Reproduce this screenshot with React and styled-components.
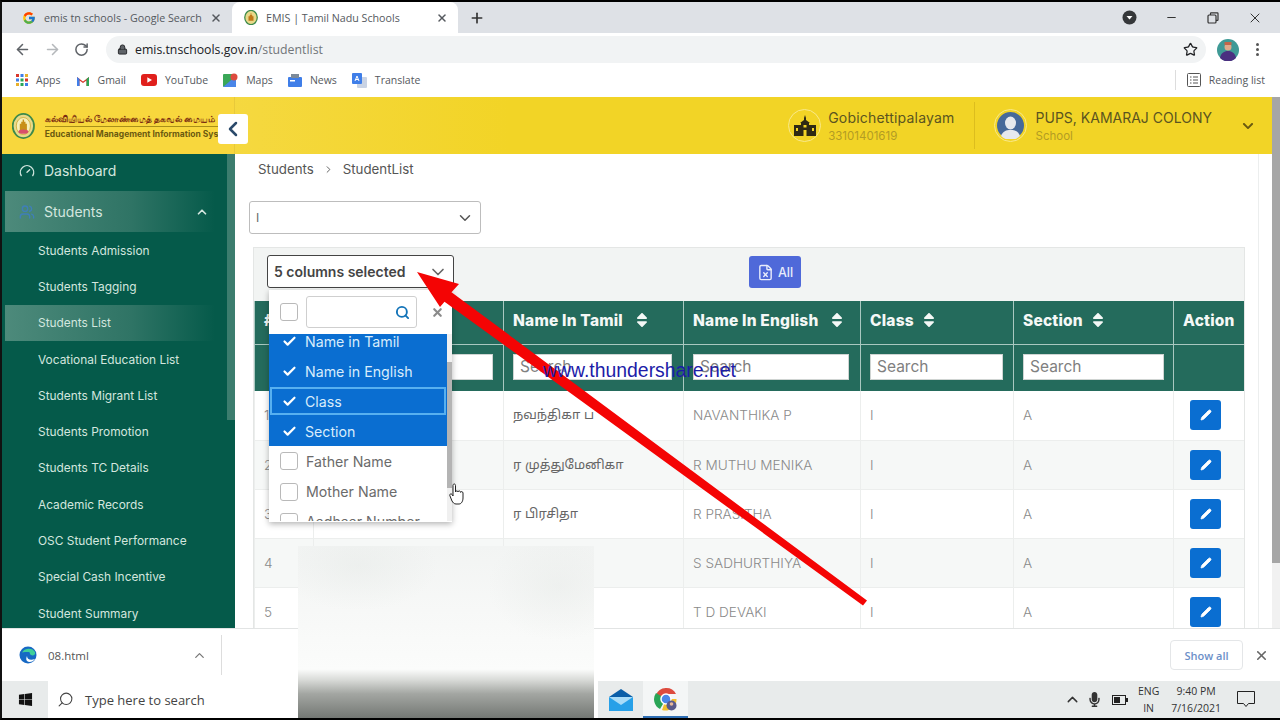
import React from 'react';
import styled, { createGlobalStyle } from 'styled-components';
import { ArrowLeft, ArrowRight, RotateCw, Star, Plus, X, Minus, Lock, ChevronDown, ChevronUp, ChevronLeft, ChevronRight, Search, Check, Pencil, FileX, Gauge, Users } from 'lucide-react';
import { FcGoogle } from 'react-icons/fc';
import { FaWindows, FaSort, FaChevronDown, FaMicrophone } from 'react-icons/fa';

const Global = createGlobalStyle`
  html, body { margin: 0; padding: 0; background: #000; }
  * { box-sizing: border-box; }
  body { font-family: Inter, "Noto Sans", sans-serif; }
`;

const Screen = styled.div`
  position: relative;
  width: 1280px;
  height: 720px;
  overflow: hidden;
  display: flex;
  flex-direction: column;
  background: #fff;
  border-top: 2px solid #000;
  border-bottom: 2px solid #000;
  border-left: 2px solid #111;
`;

/* browser chrome */
const TabStrip = styled.div`
  height: 31px;
  flex: none;
  background: #dee1e6;
  display: flex;
  align-items: flex-end;
  font-family: "Open Sans", sans-serif;
  font-size: 10.7px;
  color: #55595e;
  padding-left: 8px;
`;
const Tab = styled.div`
  width: ${p => p.$w}px;
  height: 31px;
  display: flex;
  align-items: center;
  gap: 8px;
  padding: 0 10px 0 12px;
  border-radius: 8px 8px 0 0;
  background: ${p => (p.$active ? '#fff' : 'transparent')};
  span { flex: 1; white-space: nowrap; }
  svg { flex: none; }
`;
const NewTab = styled.div`
  width: 38px;
  height: 31px;
  display: flex;
  align-items: center;
  justify-content: center;
  color: #333;
`;
const WinControls = styled.div`
  margin-left: auto;
  height: 31px;
  padding-right: 4px;
  display: flex;
  align-items: center;
  color: #333;
`;
const WinBtn = styled.div`
  width: 42px;
  display: flex;
  justify-content: center;
`;
const Toolbar = styled.div`
  height: 32px;
  flex: none;
  background: #fff;
  display: flex;
  align-items: center;
  padding: 1px 0 0 12px;
  color: #555;
`;
const NavBtn = styled.div`
  width: 30px;
  display: flex;
  color: ${p => p.$off ? '#b5b8bb' : '#5f6368'};
`;
const Omnibox = styled.div`
  margin-left: 2px;
  width: 1100px;
  height: 27px;
  border-radius: 14px;
  background: #f1f3f4;
  display: flex;
  align-items: center;
  gap: 7px;
  padding: 0 8px 0 11px;
  font-family: "Open Sans", sans-serif;
  font-size: 12.3px;
  color: #202124;
  em { font-style: normal; color: #72767a; }
`;
const ProfileSlot = styled.div`
  margin-left: 11px;
  display: flex;
`;
const MoreDots = styled.div`
  margin-left: 17px;
  display: flex;
  flex-direction: column;
  gap: 2px;
  i { width: 3px; height: 3px; border-radius: 50%; background: #555; }
`;
const Bookmarks = styled.div`
  height: 32px;
  flex: none;
  background: #fff;
  display: flex;
  align-items: center;
  padding: 0 0 2px 14px;
  font-family: "Open Sans", sans-serif;
  font-size: 10.5px;
  color: #55595e;
`;
const Mark = styled.div`
  display: flex;
  align-items: center;
  gap: 8px;
  margin-right: ${p => p.$gap}px;
`;
const ReadingList = styled.div`
  margin-left: auto;
  height: 20px;
  display: flex;
  align-items: center;
  gap: 8px;
  padding: 0 15px 0 11px;
  border-left: 1px solid #ddd;
`;

/* page */
const PageRow = styled.div`
  flex: 1;
  min-height: 0;
  display: flex;
`;
const Page = styled.div`
  flex: 1;
  min-width: 0;
  display: flex;
  flex-direction: column;
`;
const PageScroll = styled.div`
  width: 8px;
  flex: none;
  background: #f1f1f1;
  div { height: 466px; background: #a6a6a6; }
`;
const Header = styled.header`
  position: relative;
  height: 57px;
  flex: none;
  display: flex;
  align-items: center;
  background: linear-gradient(90deg, #f8dc55, #f2d426 40%);
  font-family: Inter, sans-serif;
`;
const Brand = styled.div`
  width: 233px;
  height: 100%;
  flex: none;
  display: flex;
  align-items: center;
  gap: 5px;
  padding-left: 10px;
  overflow: hidden;
  background: #f8d73d;
  border-right: 1px solid #e8c93a;
`;
const BrandText = styled.div`
  margin-left: 5px;
  white-space: nowrap;
  font-size: 8.5px;
  font-weight: 700;
  color: #6b5a10;
  div:first-child { border-bottom: 1px solid #a88f18; padding-bottom: 1px; margin-bottom: 2px; color: #7a2a10; font-family: "Noto Sans", sans-serif; }
`;
const Toggle = styled.div`
  position: absolute;
  left: 216px;
  top: 17px;
  width: 30px;
  height: 30px;
  background: #fff;
  border-radius: 3px;
  display: flex;
  align-items: center;
  justify-content: center;
  color: #2b4a6b;
`;
const HeadInfo = styled.div`
  margin-left: auto;
  display: flex;
  align-items: center;
  height: 47px;
`;
const InfoBlock = styled.div`
  display: flex;
  align-items: center;
  gap: ${p => p.$gap}px;
  padding: ${p => p.$pad};
  border-right: ${p => (p.$line ? '1px solid #dcbd1e' : 'none')};
  height: 100%;
`;
const Ring = styled.div`
  width: 33px;
  height: 33px;
  border-radius: 50%;
  border: 1.5px solid #f9e98a;
  display: flex;
  align-items: center;
  justify-content: center;
`;
const InfoName = styled.div`
  font-size: 14px;
  letter-spacing: ${p => p.$ls || 0}px;
  color: #5b5420;
  white-space: nowrap;
`;
const InfoSub = styled.div`
  margin-top: 3px;
  font-size: 11.5px;
  color: #b39c24;
`;
const HeadChevron = styled.div`
  width: 60px;
  padding-left: 12px;
  display: flex;
  justify-content: center;
  color: #6a5a10;
`;

const Main = styled.div`
  flex: 1;
  min-height: 0;
  display: flex;
`;
const Sidebar = styled.nav`
  width: 233px;
  flex: none;
  display: flex;
  background: #055a4a;
  overflow: hidden;
`;
const SideList = styled.div`
  flex: 1;
  padding: 0 12px 0 3px;
  color: #d3e6df;
`;
const SideRail = styled.div`
  width: 8px;
  flex: none;
  div { height: 266px; background: #3c7d6e; }
`;
const SideTop = styled.div`
  height: ${p => p.$h}px;
  padding: 0 6px ${p => p.$pb || 0}px 14px;
  display: flex;
  align-items: center;
  gap: 9px;
  font-size: 14px;
  background: ${p => (p.$active ? 'linear-gradient(90deg, #4d8a7b, #2f7465 60%, #055a4a 100%)' : 'transparent')};
`;
const SideCaret = styled.span`
  margin-left: auto;
  display: flex;
`;
const SideItem = styled.div`
  height: 36.3px;
  display: flex;
  align-items: center;
  padding-left: 33px;
  font-size: 11.9px;
  white-space: nowrap;
  background: ${p => (p.$active ? 'linear-gradient(90deg, #4d8a7b, #2f7465 60%, #055a4a 100%)' : 'transparent')};
`;
const Content = styled.section`
  flex: 1;
  min-width: 0;
  overflow: hidden;
  background: #fff;
  border-right: 1px solid #eceeee;
  margin-right: 13px;
  padding: 0 0 0 14px;
  color: #555;
`;
const Crumbs = styled.div`
  height: 30px;
  margin-left: 9px;
  display: flex;
  align-items: center;
  gap: 9px;
  font-size: 13.3px;
  color: #555;
`;
const ClassSelect = styled.div`
  margin-top: 17px;
  width: 232px;
  height: 33px;
  padding: 0 6px;
  border: 1px solid #bdbdbd;
  border-radius: 3px;
  display: flex;
  align-items: center;
  justify-content: space-between;
  font-size: 12px;
  color: #666;
  background: #fff;
`;
const Card = styled.div`
  position: relative;
  margin: 13px 0 0 4px;
  width: 992px;
  background: #f2f4f3;
  border: 1px solid #e4e6e5;
  border-bottom: none;
`;
const CardBar = styled.div`
  height: 53px;
  display: flex;
  align-items: flex-start;
  padding: 7px 0 0 13px;
`;
const ColumnSelect = styled.div`
  width: 187px;
  height: 33px;
  padding: 0 5px 0 6px;
  border: 1px solid #444;
  border-radius: 3px;
  background: #fff;
  display: flex;
  align-items: center;
  justify-content: space-between;
  font-size: 14px;
  font-weight: 600;
  color: #444;
  white-space: nowrap;
`;
const ExportBtn = styled.div`
  margin: 1px 0 0 295px;
  width: 52px;
  height: 32px;
  border-radius: 3px;
  background: #4f69d9;
  color: #e8ecfb;
  display: flex;
  align-items: center;
  justify-content: center;
  gap: 4px;
  font-size: 12.5px;
  font-weight: 500;
`;
const Table = styled.table`
  width: 989px;
  table-layout: fixed;
  border-collapse: collapse;
  background: #fff;
`;
const Th = styled.th`
  height: 43px;
  padding: 0 9px 3px;
  text-align: left;
  background: #246b5c;
  color: #f4f8f6;
  font-size: 15.5px;
  letter-spacing: .2px;
  font-weight: 800;
  white-space: nowrap;
  border-left: 1px solid #a9c8c0;
  border-bottom: 1px solid #a9c8c0;
  svg { margin-left: ${p => p.$iconGap || 10}px; vertical-align: -3px; }
`;
const FilterCell = styled.td`
  height: 47px;
  padding: 0 9px 2px;
  background: #246b5c;
  border-left: 1px solid #a9c8c0;
`;
const FilterInput = styled.div`
  height: 26px;
  width: ${p => p.$w}px;
  padding-left: 6px;
  background: #fff;
  border: 1px solid #cfd4d2;
  font-size: 15.5px;
  line-height: 24px;
  color: #808080;
`;
const Row = styled.tr`
  background: ${p => (p.$alt ? '#f6f8f7' : '#fff')};
`;
const Td = styled.td`
  height: 49px;
  padding: 0 9px;
  font-size: 13.6px;
  font-weight: 300;
  color: #8a8a8a;
  border-left: 1px solid #eceeed;
  border-bottom: 1px solid #eceeed;
  white-space: nowrap;
  font-family: Inter, "Noto Sans Tamil", "Noto Sans", sans-serif;
`;
const TamilTd = styled(Td)`
  font-size: 13px;
  font-weight: 400;
  color: #666;
`;
const EditBtn = styled.div`
  width: 31px;
  height: 30px;
  margin-left: 7px;
  border-radius: 3px;
  background: #0a6ed1;
  color: #fff;
  display: flex;
  align-items: center;
  justify-content: center;
`;

/* multiselect panel */
const Menu = styled.div`
  position: absolute;
  left: 15px;
  top: 42px;
  width: 183px;
  height: 232px;
  background: #fff;
  box-shadow: 0 2px 6px rgba(0, 0, 0, 0.3);
  overflow: hidden;
  z-index: 3;
`;
const MenuHead = styled.div`
  height: 44px;
  display: flex;
  align-items: center;
  padding: 0 0 0 11px;
  gap: 8px;
  color: #8a8a8a;
  svg { flex: none; }
`;
const MenuSearch = styled.div`
  width: 111px;
  height: 32px;
  flex: none;
  border: 1px solid #cfcfcf;
  border-radius: 3px;
  display: flex;
  align-items: center;
  justify-content: flex-end;
  padding-right: 6px;
  color: #1273b8;
  margin-right: 6px;
`;
const Box = styled.div`
  width: 18px;
  height: 18px;
  flex: none;
  border: 1px solid #b9b9b9;
  border-radius: 3px;
  background: #fff;
`;
const MenuBody = styled.div`
  height: 187px;
  display: flex;
  overflow: hidden;
`;
const MenuList = styled.div`
  flex: 1;
  min-width: 0;
  overflow: hidden;
`;
const MenuItem = styled.div`
  height: 30.1px;
  display: flex;
  align-items: center;
  gap: 8px;
  padding-left: ${p => (p.$on ? 13 : 11)}px;
  margin-top: ${p => p.$first ? -8 : 0}px;
  font-size: 14.2px;
  white-space: nowrap;
  color: ${p => (p.$on ? '#d8ecfb' : '#6b6b6b')};
  background: ${p => (p.$on ? '#0a6ed1' : '#fff')};
  outline: ${p => (p.$focus ? '2px solid #57b0f0' : 'none')};
  outline-offset: -3px;
`;
const MenuRail = styled.div`
  width: 5px;
  flex: none;
  background: #f0f0f0;
  div { margin-top: 28px; height: 126px; background: #b4b4b4; }
`;

/* bottom bars */
const DownloadBar = styled.div`
  height: 53px;
  flex: none;
  display: flex;
  align-items: center;
  background: #fff;
  border-top: 1px solid #e2e4e4;
  font-family: "Open Sans", sans-serif;
  font-size: 11.5px;
  color: #555;
`;
const DownloadItem = styled.div`
  width: 220px;
  height: 40px;
  padding: 0 14px 0 17px;
  display: flex;
  align-items: center;
  gap: 11px;
  border-right: 1px solid #ddd;
  svg:last-child { margin-left: auto; color: #777; }
`;
const ShowAll = styled.div`
  margin-left: auto;
  width: 73px;
  height: 30px;
  border: 1px solid #e4e6e8;
  border-radius: 4px;
  display: flex;
  align-items: center;
  justify-content: center;
  font-size: 11px;
  font-weight: 600;
  color: #6c8fc8;
`;
const CloseBar = styled.div`
  width: 37px;
  display: flex;
  justify-content: center;
  color: #666;
`;
const Taskbar = styled.div`
  height: 37px;
  flex: none;
  display: flex;
  align-items: center;
  background: #e8ebeb;
  font-family: "Open Sans", sans-serif;
  color: #222;
`;
const StartBtn = styled.div`
  width: 46px;
  display: flex;
  justify-content: center;
`;
const TaskSearch = styled.div`
  width: 550px;
  height: 37px;
  background: #fff;
  display: flex;
  align-items: center;
  gap: 11px;
  padding-left: 9px;
  font-size: 13px;
  color: #444;
`;
const TaskApp = styled.div`
  width: 45px;
  height: 37px;
  display: flex;
  align-items: center;
  justify-content: center;
  background: ${p => (p.$open ? '#f4f6f6' : 'transparent')};
  border-bottom: ${p => (p.$open ? '2px solid #2f6fb5' : 'none')};
`;
const Tray = styled.div`
  margin-left: auto;
  display: flex;
  align-items: center;
  gap: 10px;
  font-size: 10.5px;
  padding-right: 25px;
  color: #333;
`;
const TrayCaret = styled.span`
  display: flex;
  margin-right: -4px;
`;
const TrayText = styled.div`
  margin-right: ${p => p.$mr}px;
  text-align: center;
  line-height: 17px;
  white-space: nowrap;
`;

/* things lying over the screen */
const ArrowLayer = styled.svg`
  position: absolute;
  left: -2px;
  top: -2px;
  width: 1280px;
  height: 720px;
  pointer-events: none;
  z-index: 6;
`;
const Watermark = styled.div`
  position: absolute;
  left: 541px;
  top: 357px;
  font-family: "Liberation Sans", sans-serif;
  font-size: 19.4px;
  white-space: nowrap;
  color: #1c1ca8;
  z-index: 7;
`;
const Blur = styled.div`
  position: absolute;
  left: 296px;
  top: 544px;
  width: 296px;
  height: 176px;
  z-index: 4;
  background:
    radial-gradient(ellipse 80px 45px at 60px 20px, rgba(225, 229, 226, .35), transparent),
    radial-gradient(ellipse 70px 55px at 260px 40px, rgba(225, 229, 226, .35), transparent),
    linear-gradient(180deg, #f2f4f3 0, #f8f9f8 45%, #fbfcfb 70%, #d9dbd8 76%, #a3a6a2 84%, #6c706c 100%);
`;
const CursorSlot = styled.svg`
  position: absolute;
  left: 447px;
  top: 481px;
  z-index: 7;
`;

const Emblem = () => (
  <svg width="32" height="36" viewBox="0 0 32 36">
    <ellipse cx="16" cy="18" rx="15" ry="17" fill="#e8d98a" stroke="#3d8a4a" strokeWidth="2.5" />
    <ellipse cx="16" cy="18" rx="10" ry="12" fill="#f7efb8" stroke="#c8a020" />
    <path d="M11 24V15h2v-3h2V9h2v3h2v3h2v9z" fill="#c89018" />
    <ellipse cx="16" cy="26" rx="7" ry="3" fill="#d8506a" />
  </svg>
);
const TabEmblem = () => (
  <svg width="14" height="15" viewBox="0 0 32 36">
    <ellipse cx="16" cy="18" rx="15" ry="17" fill="#e8d98a" stroke="#3d8a4a" strokeWidth="3" />
    <path d="M10 26V15h3v-3h2V8h2v4h2v3h3v11z" fill="#c07818" />
  </svg>
);
const GmailIcon = () => (
  <svg width="14" height="11" viewBox="0 0 14 11">
    <path d="M1 11V2l6 4.500L13 2v9h-2.500V5.500L7 8 3.500 5.500V11z" fill="#d9372c" />
    <path d="M1 11V2l2.500 2v7z" fill="#3f7ee8" /><path d="M13 11V2l-2.500 2v7z" fill="#2aa556" />
  </svg>
);
const YouTubeIcon = () => (
  <svg width="16" height="12" viewBox="0 0 16 12">
    <rect width="16" height="12" rx="3" fill="#e0201c" /><path d="M6.300 3.200v5.600L11 6z" fill="#fff" />
  </svg>
);
const AppsIcon = () => (
  <svg width="12" height="12" viewBox="0 0 12 12">
    {['#d9372c', '#3f7ee8', '#e8b02a', '#3f7ee8', '#2aa556', '#d9372c', '#e8b02a', '#2aa556', '#3f7ee8'].map((c, i) => (
      <rect key={i} x={(i % 3) * 4.500} y={Math.floor(i / 3) * 4.500} width="3" height="3" fill={c} />
    ))}
  </svg>
);
const MapsIcon = () => (
  <svg width="15" height="14" viewBox="0 0 15 14">
    <rect y="1" width="13" height="13" rx="1" fill="#3aa757" /><path d="M0 14L13 3v11z" fill="#4a86e8" /><circle cx="11" cy="4" r="3.500" fill="#dd4b3e" />
  </svg>
);
const NewsIcon = () => (
  <svg width="14" height="13" viewBox="0 0 14 13">
    <rect y="3" width="14" height="10" rx="1" fill="#3f7ee8" /><rect x="3" width="8" height="4" fill="#7c8a99" /><rect x="2" y="6" width="5" height="1.500" fill="#fff" />
  </svg>
);
const TranslateIcon = () => (
  <svg width="15" height="15" viewBox="0 0 15 15">
    <rect x="5" y="4" width="10" height="11" rx="1" fill="#c9d3e4" /><rect width="10" height="11" rx="1" fill="#3f7ee8" />
    <path d="M3 8l2-5 2 5M3.800 6.500h2.400" stroke="#fff" fill="none" />
  </svg>
);
const ChromeIcon = () => (
  <svg width="24" height="24" viewBox="0 0 24 24">
    <path d="M12 12L2 8a11 11 0 0 1 20-1H12z" fill="#dd4b3e" />
    <path d="M12 12l-6 10A11 11 0 0 1 2 6z" fill="#2aa556" />
    <path d="M12 12h10.500A11 11 0 0 1 8 23z" fill="#f2c02e" />
    <circle cx="12" cy="12" r="5" fill="#4a86e8" stroke="#fff" strokeWidth="1.500" />
    <circle cx="17.500" cy="18.500" r="5" fill="#5a5a8a" /><circle cx="17.500" cy="17" r="1.800" fill="#e8b898" />
  </svg>
);
const EdgeIcon = () => (
  <svg width="18" height="18" viewBox="0 0 18 18">
    <circle cx="9" cy="9" r="8.500" fill="#1769c4" />
    <path d="M3 7a7 6 0 0 1 13-1c1 3-2 4-4 3-2-1 0-3-3-3-3 0-6 0-6 1z" fill="#3fcf9a" />
    <path d="M8 10c0 3 3 5 8 3-2 3-6 4-8 2-1-1-1-3 0-5z" fill="#fff" />
  </svg>
);
const MailIcon = () => (
  <svg width="24" height="22" viewBox="0 0 24 22">
    <path d="M12 0l12 8H0z" fill="#0a5ea8" /><rect y="8" width="24" height="14" fill="#27a0e8" />
    <path d="M0 8l12 8 12-8" fill="#a9dcf8" />
  </svg>
);
const SchoolIcon = () => (
  <svg width="24" height="22" viewBox="0 0 24 22" fill="#2f2a14">
    <path d="M12 0l1 3 0 2 4 3H7l4-3V3z" /><rect x="8" y="8" width="8" height="13" />
    <rect x="1" y="10" width="7" height="11" /><rect x="16" y="10" width="7" height="11" />
    <rect x="3" y="13" width="2" height="3" fill="#f2d426" /><rect x="19" y="13" width="2" height="3" fill="#f2d426" />
    <rect x="10.500" y="15" width="3" height="6" fill="#f2d426" /><rect x="10.500" y="10" width="3" height="2.500" fill="#f2d426" />
  </svg>
);
const PersonIcon = () => (
  <svg width="27" height="27" viewBox="0 0 27 27">
    <circle cx="13.500" cy="13.500" r="13.500" fill="#46699a" />
    <ellipse cx="13.500" cy="11" rx="5.500" ry="6.500" fill="#e6e9ee" />
    <path d="M4 24c2-5 5-6 9.500-6s7.500 1 9.500 6a13.500 13.500 0 0 1-19 0z" fill="#e6e9ee" />
  </svg>
);
const Avatar = () => (
  <svg width="22" height="22" viewBox="0 0 22 22">
    <circle cx="11" cy="11" r="11" fill="#3f9a96" />
    <path d="M3 19c1-5 4-7 8-7s7 2 8 7a11 11 0 0 1-16 0z" fill="#4a2f80" />
    <circle cx="11" cy="8" r="3.500" fill="#e0a98a" /><rect x="7.500" y="3" width="7" height="3" fill="#c2664a" />
  </svg>
);
const RestoreIcon = () => (
  <svg width="12" height="12" viewBox="0 0 12 12" fill="none" stroke="#333" strokeWidth="1.200">
    <rect x="1" y="3" width="8" height="8" rx="1" fill="#dee1e6" /><path d="M3.500 3V1.500a.6.6 0 0 1 .6-.6h6.300a.6.6 0 0 1 .6.600v6.300a.6.6 0 0 1-.6.600H9" />
  </svg>
);
const TabSearchIcon = () => (
  <svg width="15" height="15" viewBox="0 0 15 15">
    <circle cx="7.500" cy="7.500" r="7" fill="#35373a" /><path d="M4.500 6h6l-3 3.500z" fill="#fff" />
  </svg>
);
const HandCursor = () => (
  <CursorSlot width="16" height="22" viewBox="0 0 16 22">
    <path d="M4 2.500c0-2 2.500-2 2.500 0V9c0-1.500 2.500-1.500 2.500 0 0-1.500 2.500-1.500 2.500 0.300 0-1 2.500-1 2.500 .7V15c0 3-1.500 6-4 6H7c-2 0-3-1.500-4-3L1 13c-1-1.500 1-3 2-1.500l1 1.500z" fill="#fff" stroke="#222" strokeWidth="1" />
  </CursorSlot>
);
const ListGlyph = () => (
  <svg width="14" height="14" viewBox="0 0 14 14" fill="none" stroke="#555">
    <rect x=".5" y=".5" width="13" height="13" rx="1" /><path d="M3 4h1.500M6 4h5M3 7h1.500M6 7h5M3 10h1.500M6 10h5" />
  </svg>
);
const BatteryGlyph = () => (
  <svg width="16" height="10" viewBox="0 0 16 10">
    <rect x=".5" y=".5" width="13" height="9" fill="none" stroke="#222" /><rect x="2" y="2" width="6" height="6" fill="#222" /><rect x="14" y="3" width="2" height="4" fill="#222" />
  </svg>
);
const ChatGlyph = () => (
  <svg width="18" height="17" viewBox="0 0 18 17" fill="none" stroke="#222">
    <path d="M.5.500h17v12h-6l-2.500 3-2.500-3h-6z" />
  </svg>
);

const sideItems = ['Students Admission', 'Students Tagging', 'Students List', 'Vocational Education List', 'Students Migrant List', 'Students Promotion', 'Students TC Details', 'Academic Records', 'OSC Student Performance', 'Special Cash Incentive', 'Student Summary'];

const rows = [
  { n: 1, ta: 'நவந்திகா ப', en: 'NAVANTHIKA P' },
  { n: 2, ta: 'ர முத்துமேனிகா', en: 'R MUTHU MENIKA' },
  { n: 3, ta: 'ர பிரசிதா', en: 'R PRASITHA' },
  { n: 4, ta: 'ச சதுர்தியா', en: 'S SADHURTHIYA' },
  { n: 5, ta: 'த தேவகி', en: 'T D DEVAKI' },
];

const columns = [
  { name: 'Name in Tamil', on: true, first: true },
  { name: 'Name in English', on: true },
  { name: 'Class', on: true, focus: true },
  { name: 'Section', on: true },
  { name: 'Father Name' },
  { name: 'Mother Name' },
  { name: 'Aadhaar Number' },
];

export default function App() {
  return (
    <>
      <Global />
      <Screen>
        <TabStrip>
          <Tab $w={222}><FcGoogle size={14} /><span>emis tn schools - Google Search</span><X size={12} strokeWidth={3} /></Tab>
          <Tab $w={226} $active><TabEmblem /><span>EMIS | Tamil Nadu Schools</span><X size={12} strokeWidth={3} /></Tab>
          <NewTab><Plus size={16} strokeWidth={2.5} /></NewTab>
          <WinControls>
            <WinBtn><TabSearchIcon /></WinBtn>
            <WinBtn><Minus size={13} /></WinBtn>
            <WinBtn><RestoreIcon /></WinBtn>
            <WinBtn><X size={16} strokeWidth={1.5} /></WinBtn>
          </WinControls>
        </TabStrip>
        <Toolbar>
          <NavBtn><ArrowLeft size={17} strokeWidth={2.2} /></NavBtn>
          <NavBtn $off><ArrowRight size={17} strokeWidth={2.2} /></NavBtn>
          <NavBtn><RotateCw size={15} strokeWidth={2.4} /></NavBtn>
          <Omnibox>
            <Lock size={11} fill="#5f6368" />
            <div>emis.tnschools.gov.in<em>/studentlist</em></div>
            <Star size={15} style={{ marginLeft: 'auto' }} />
          </Omnibox>
          <ProfileSlot><Avatar /></ProfileSlot>
          <MoreDots><i /><i /><i /></MoreDots>
        </Toolbar>
        <Bookmarks>
          <Mark $gap={15}><AppsIcon />Apps</Mark>
          <Mark $gap={15}><GmailIcon />Gmail</Mark>
          <Mark $gap={15}><YouTubeIcon />YouTube</Mark>
          <Mark $gap={15}><MapsIcon />Maps</Mark>
          <Mark $gap={15}><NewsIcon />News</Mark>
          <Mark $gap={0}><TranslateIcon />Translate</Mark>
          <ReadingList><ListGlyph />Reading list</ReadingList>
        </Bookmarks>
        <PageRow>
          <Page>
            <Header>
              <Brand>
                <Emblem />
                <BrandText>
                  <div>கல்வியியல் மேலாண்மைத் தகவல் மையம்</div>
                  <div>Educational Management Information System</div>
                </BrandText>
              </Brand>
              <Toggle><ChevronLeft size={24} strokeWidth={2.5} /></Toggle>
              <HeadInfo>
                <InfoBlock $line $gap={7} $pad="0 19px 0 0">
                  <Ring><SchoolIcon /></Ring>
                  <div><InfoName $ls={0.2}>Gobichettipalayam</InfoName><InfoSub>33101401619</InfoSub></div>
                </InfoBlock>
                <InfoBlock $gap={9} $pad="0 0 0 19px">
                  <Ring><PersonIcon /></Ring>
                  <div><InfoName>PUPS, KAMARAJ COLONY</InfoName><InfoSub>School</InfoSub></div>
                </InfoBlock>
                <HeadChevron><FaChevronDown size={12} /></HeadChevron>
              </HeadInfo>
            </Header>
            <Main>
              <Sidebar>
                <SideList>
                  <SideTop $h={37} $pb={4}><Gauge size={16} />Dashboard</SideTop>
                  <SideTop $h={41} $active><Users size={16} color="#3f7fb8" />Students<SideCaret><ChevronUp size={14} strokeWidth={3} /></SideCaret></SideTop>
                  {sideItems.map(name => (
                    <SideItem key={name} $active={name === 'Students List'}>{name}</SideItem>
                  ))}
                </SideList>
                <SideRail><div /></SideRail>
              </Sidebar>
              <Content>
                <Crumbs>Students <ChevronRight size={11} /> StudentList</Crumbs>
                <ClassSelect>I<ChevronDown size={18} color="#555" /></ClassSelect>
                <Card>
                  <CardBar>
                    <ColumnSelect>5 columns selected<ChevronDown size={20} color="#666" /></ColumnSelect>
                    <ExportBtn><FileX size={17} />All</ExportBtn>
                  </CardBar>
                  <Menu>
                    <MenuHead>
                      <Box />
                      <MenuSearch><Search size={15} strokeWidth={3} /></MenuSearch>
                      <X size={13} strokeWidth={4} />
                    </MenuHead>
                    <MenuBody>
                      <MenuList>
                        {columns.map(c => (
                          <MenuItem key={c.name} $on={c.on} $first={c.first} $focus={c.focus}>
                            {c.on ? <Check size={15} strokeWidth={3.5} color="#fff" /> : <Box />}
                            {c.name}
                          </MenuItem>
                        ))}
                      </MenuList>
                      <MenuRail><div /></MenuRail>
                    </MenuBody>
                  </Menu>
                  <Table>
                    <colgroup>
                      {[59, 190, 180, 177, 153, 160, 70].map((w, i) => <col key={i} style={{ width: w }} />)}
                    </colgroup>
                    <thead>
                      <tr>
                        <Th>#</Th>
                        <Th></Th>
                        <Th>Name In Tamil<FaSort size={18} /></Th>
                        <Th>Name In English<FaSort size={18} /></Th>
                        <Th $iconGap={6}>Class<FaSort size={18} /></Th>
                        <Th $iconGap={6}>Section<FaSort size={18} /></Th>
                        <Th>Action</Th>
                      </tr>
                      <tr>
                        <FilterCell></FilterCell>
                        <FilterCell><FilterInput $w={170}>Search</FilterInput></FilterCell>
                        <FilterCell><FilterInput $w={159}>Search</FilterInput></FilterCell>
                        <FilterCell><FilterInput $w={156}>Search</FilterInput></FilterCell>
                        <FilterCell><FilterInput $w={133}>Search</FilterInput></FilterCell>
                        <FilterCell><FilterInput $w={141}>Search</FilterInput></FilterCell>
                        <FilterCell></FilterCell>
                      </tr>
                    </thead>
                    <tbody>
                      {rows.map((r, i) => (
                        <Row key={r.n} $alt={i % 2 === 1}>
                          <Td>{r.n}</Td>
                          <Td></Td>
                          <TamilTd>{r.ta}</TamilTd>
                          <Td>{r.en}</Td>
                          <Td>I</Td>
                          <Td>A</Td>
                          <Td><EditBtn><Pencil size={12} fill="#fff" strokeWidth={1.5} /></EditBtn></Td>
                        </Row>
                      ))}
                    </tbody>
                  </Table>
                </Card>
              </Content>
            </Main>
          </Page>
          <PageScroll><div /></PageScroll>
        </PageRow>
        <DownloadBar>
          <DownloadItem><EdgeIcon />08.html<ChevronUp size={15} /></DownloadItem>
          <ShowAll>Show all</ShowAll>
          <CloseBar><X size={15} strokeWidth={2.5} /></CloseBar>
        </DownloadBar>
        <Taskbar>
          <StartBtn><FaWindows size={15} color="#111" /></StartBtn>
          <TaskSearch><Search size={17} strokeWidth={1.5} style={{ transform: 'scaleX(-1)' }} />Type here to search</TaskSearch>
          <TaskApp><MailIcon /></TaskApp>
          <TaskApp $open><ChromeIcon /></TaskApp>
          <Tray>
            <TrayCaret><ChevronUp size={17} /></TrayCaret>
            <FaMicrophone size={15} />
            <BatteryGlyph />
            <TrayText $mr={2}>ENG<br />IN</TrayText>
            <TrayText $mr={6}>9:40 PM<br />7/16/2021</TrayText>
            <ChatGlyph />
          </Tray>
        </Taskbar>
        <Blur />
        <Watermark>www.thundershare.net</Watermark>
        <HandCursor />
        <ArrowLayer viewBox="0 0 1280 720">
          <polygon points="417,272 459,284 451.500,292.200 867,600.600 863,605.400 444.500,301.800 440,307" fill="#f40404" />
        </ArrowLayer>
      </Screen>
    </>
  );
}
